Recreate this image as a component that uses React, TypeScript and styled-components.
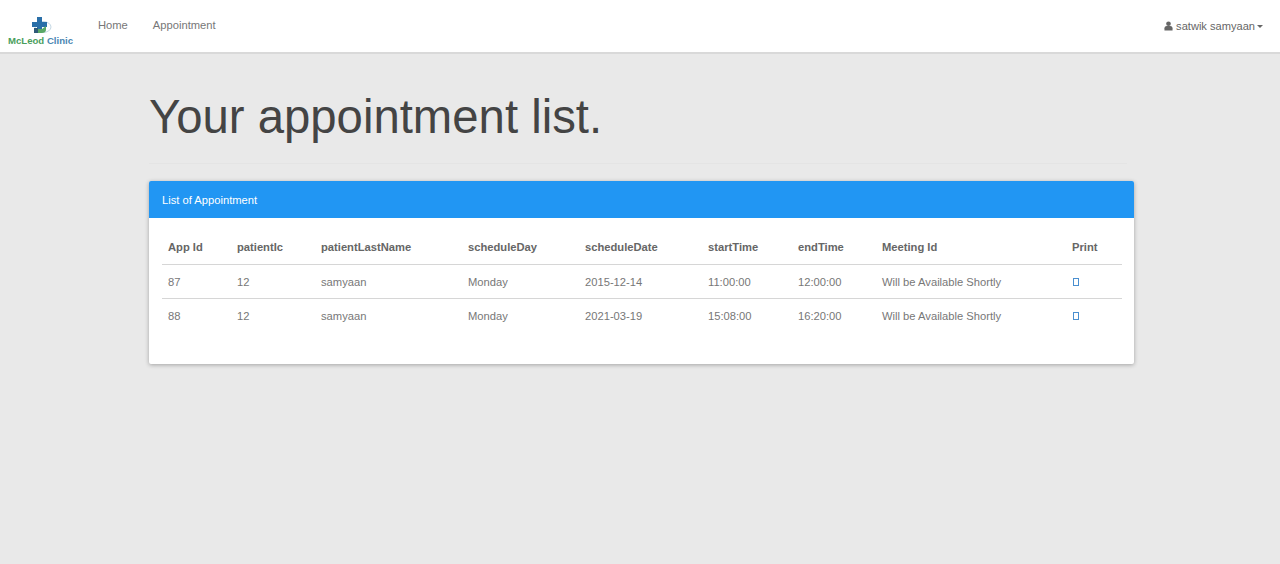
import React from "react";
import styled, { createGlobalStyle } from "styled-components";

const columns = [
  "App Id",
  "patientIc",
  "patientLastName",
  "scheduleDay",
  "scheduleDate",
  "startTime",
  "endTime",
  "Meeting Id",
  "Print",
];

const appointments = [
  ["87", "12", "samyaan", "Monday", "2015-12-14", "11:00:00", "12:00:00", "Will be Available Shortly"],
  ["88", "12", "samyaan", "Monday", "2021-03-19", "15:08:00", "16:20:00", "Will be Available Shortly"],
];

const GlobalStyle = createGlobalStyle`
  html, body {
    margin: 0;
    height: 100%;
    background: #e9e9e9;
    font-family: "Liberation Sans", Arial, sans-serif;
    font-size: 11.2px;
    color: #666;
  }
  * { box-sizing: border-box; }
`;

const Page = styled.div`
  display: flex;
  flex-direction: column;
  min-height: 564px;
`;

const Navbar = styled.nav`
  display: flex;
  align-items: center;
  justify-content: space-between;
  height: 54px;
  background: #fff;
  border-bottom: 2px solid #d9d9d9;
  padding: 0 17px 0 7px;
`;

const NavLeft = styled.div`
  display: flex;
  align-items: center;
`;

const Brand = styled.div`
  display: flex;
  flex-direction: column;
  align-items: center;
  width: 67px;
  margin-right: 24px;
  padding-top: 10px;
`;

const BrandName = styled.span`
  font-size: 9.6px;
  font-weight: 700;
  line-height: 10px;
  white-space: nowrap;
  color: #4a9e5c;
`;

const BrandAccent = styled.span`
  color: #4a86b2;
`;

const NavLink = styled.a`
  font-size: 11.2px;
  color: #777;
  margin-right: 25px;
  position: relative;
  top: -1px;
`;

const UserMenu = styled.div`
  display: flex;
  align-items: center;
  gap: 3px;
  font-size: 11.1px;
  color: #666;
`;

const UserName = styled.span`
  margin-right: -1px;
`;

const Caret = styled.span`
  width: 0;
  height: 0;
  border-left: 3.5px solid transparent;
  border-right: 3.5px solid transparent;
  border-top: 3.5px solid #666;
`;

const Main = styled.main`
  width: 985px;
  margin-left: 149px;
`;

const PageHeader = styled.div`
  padding-top: 35px;
  height: 110px;
  border-bottom: 1px solid #e4e4e4;
  width: 978px;
`;

const Heading = styled.h1`
  margin: 0;
  font-size: 47.3px;
  font-weight: 400;
  line-height: 56px;
  color: #444;
`;

const Panel = styled.section`
  margin-top: 17px;
  height: 183px;
  background: #fff;
  border-radius: 2px;
  box-shadow: 0 1px 4px rgba(0, 0, 0, 0.3);
`;

const PanelHeading = styled.div`
  display: flex;
  align-items: center;
  height: 37px;
  padding: 0 13px;
  background: #2196f3;
  color: #fff;
  font-size: 11.2px;
  border-radius: 2px 2px 0 0;
`;

const PanelBody = styled.div`
  padding: 12px 13px;
`;

const Table = styled.table`
  width: 960px;
  border-collapse: collapse;
  table-layout: fixed;
`;

const Th = styled.th<{ $width: number }>`
  width: ${(p) => p.$width}px;
  height: 34px;
  padding: 0 6px;
  text-align: left;
  font-size: 11.2px;
  font-weight: 700;
  color: #666;
  border-bottom: 1px solid #d6d6d6;
`;

const Td = styled.td`
  height: 34px;
  padding: 1px 6px 0;
  font-size: 11.2px;
  color: #777;
`;

const Row = styled.tr`
  & + & td {
    border-top: 1px solid #d6d6d6;
  }
`;

const PrintGlyph = styled.span`
  display: inline-block;
  width: 6px;
  height: 8px;
  margin: 3px 0 0 1px;
  border: 1px solid #4a8fd0;
`;

const widths = [69, 84, 147, 117, 123, 90, 84, 190, 56];

const UserIcon = () => (
  <svg width="9" height="10" viewBox="0 0 10 11" aria-hidden="true">
    <circle cx="5" cy="3" r="2.6" fill="#666" />
    <path d="M0.5 10.5V8c0-1.7 1.4-2.6 2.5-2.6h4c1.1 0 2.5.9 2.5 2.6v2.5z" fill="#666" />
  </svg>
);

const LogoMark = () => (
  <svg width="24" height="20" viewBox="0 0 24 20" aria-hidden="true">
    <ellipse cx="14" cy="11" rx="8" ry="5.5" fill="none" stroke="#c5d8e4" strokeWidth="1" />
    <path d="M8 1h5v5h5v5h-5v2H8v-2H3V6h5z" fill="#2a6fa8" />
    <path d="M9 13h4l4-3v4c0 2-2 3-4 3H9z" fill="#5aa866" />
    <rect x="5" y="12" width="4" height="5" fill="#2f5a78" />
  </svg>
);

export default function App() {
  return (
    <Page>
      <GlobalStyle />
      <Navbar>
        <NavLeft>
          <Brand>
            <LogoMark />
            <BrandName>
              McLeod <BrandAccent>Clinic</BrandAccent>
            </BrandName>
          </Brand>
          <NavLink>Home</NavLink>
          <NavLink>Appointment</NavLink>
        </NavLeft>
        <UserMenu>
          <UserIcon />
          <UserName>satwik samyaan</UserName>
          <Caret />
        </UserMenu>
      </Navbar>
      <Main>
        <PageHeader>
          <Heading>Your appointment list.</Heading>
        </PageHeader>
        <Panel>
          <PanelHeading>List of Appointment</PanelHeading>
          <PanelBody>
            <Table>
              <thead>
                <tr>
                  {columns.map((c, i) => (
                    <Th key={c} $width={widths[i]}>
                      {c}
                    </Th>
                  ))}
                </tr>
              </thead>
              <tbody>
                {appointments.map((a) => (
                  <Row key={a[0]}>
                    {a.map((v, i) => (
                      <Td key={i}>{v}</Td>
                    ))}
                    <Td>
                      <PrintGlyph />
                    </Td>
                  </Row>
                ))}
              </tbody>
            </Table>
          </PanelBody>
        </Panel>
      </Main>
    </Page>
  );
}
